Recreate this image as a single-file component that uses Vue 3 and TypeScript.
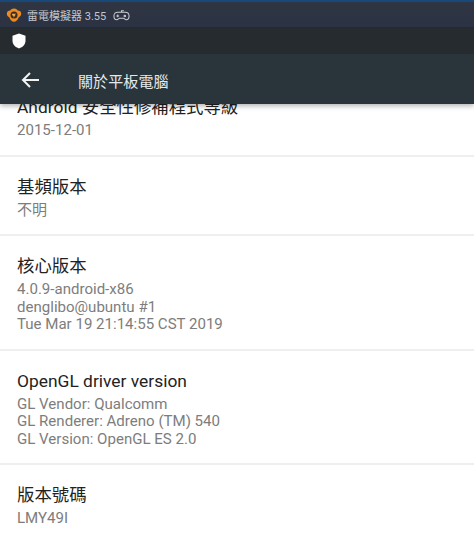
<script setup lang="ts">
interface Row { title: string; lines: string[] }
const rows: Row[] = [
  { title: 'Android 安全性修補程式等級', lines: ['2015-12-01'] },
  { title: '基頻版本', lines: ['不明'] },
  { title: '核心版本', lines: ['4.0.9-android-x86', 'denglibo@ubuntu #1', 'Tue Mar 19 21:14:55 CST 2019'] },
  { title: 'OpenGL driver version', lines: ['GL Vendor: Qualcomm', 'GL Renderer: Adreno (TM) 540', 'GL Version: OpenGL ES 2.0'] },
  { title: '版本號碼', lines: ['LMY49I'] },
]
</script>

<template>
  <div class="screen">
    <header class="header">
      <div class="titlebar">
        <svg class="logo" viewBox="0 0 16 16" width="16" height="16">
          <path d="M8 1.500C5.800 1.500 4.800 2.600 4.300 3.600 2.300 3.600.8 4.800.8 6.800c0 1.800 1.200 3 2.600 3.700C4.200 13 6 14.800 8 14.800s3.800-1.800 4.600-4.300c1.400-.7 2.600-1.900 2.600-3.700 0-2-1.500-3.200-3.500-3.200C11.200 2.600 10.200 1.500 8 1.500Z" fill="#ee8a22"/>
          <circle cx="8" cy="8" r="3.500" fill="#3a2d26"/>
          <path d="M5.800 6.800h4.400L8.600 8.300l.9.300L7.200 10.800l.5-1.800-1.100-.3Z" fill="#f0a850"/>
        </svg>
        <span class="app-name">雷電模擬器 3.55</span>
        <svg class="pad" viewBox="0 0 18 12" width="17" height="12" fill="none" stroke="#c9ccd0" stroke-width="1.100">
          <path d="M5 3h8c2.200 0 4 1.700 4 4s-1.300 4-3 4c-1.500 0-2-1.500-3-1.500H7C6 9.500 5.500 11 4 11 2.300 11 1 9.300 1 7s1.800-4 4-4Z"/>
          <path d="M9 3V1.500h2.500M3.500 7h3M5 5.500v3"/>
          <circle cx="12.500" cy="7" r=".8"/>
        </svg>
      </div>
      <div class="statusbar">
        <svg viewBox="0 0 14 16" width="14" height="16">
          <path d="M7 .5 13.500 2.800v5c0 3.700-2.700 6.300-6.500 7.700C3.200 14.100.5 11.500.5 7.800v-5Z" fill="#fff"/>
        </svg>
      </div>
      <div class="toolbar">
        <svg class="back" viewBox="0 0 18 16" width="18" height="16" fill="none" stroke="#f2f4f4" stroke-width="2">
          <path d="M18 8H2M9 1 2 8l7 7"/>
        </svg>
        <span class="page-title">關於平板電腦</span>
      </div>
    </header>
    <main class="list">
      <section v-for="row in rows" :key="row.title" class="row">
        <div class="title">{{ row.title }}</div>
        <div v-for="line in row.lines" :key="line" class="sub">{{ line }}</div>
      </section>
    </main>
  </div>
</template>

<style>
html, body { margin: 0; background: #fff; overflow: hidden; }
</style>

<style scoped>
.screen {
  width: 474px;
  height: 545px;
  overflow: hidden;
  background: #fff;
  font-family: Roboto, "Noto Sans CJK TC", sans-serif;
}
.header {
  position: relative;
  z-index: 2;
  box-shadow: 0 2px 5px rgba(0, 0, 0, 0.3);
}
.titlebar {
  height: 25px;
  border-top: 2px solid #17497a;
  background: linear-gradient(#2f3542, #2b3243);
  display: flex;
  align-items: center;
  padding-left: 6px;
  color: #c2c6cc;
  font-size: 11px;
}
.logo { margin-right: 5px; }
.app-name { white-space: nowrap; }
.pad { margin-left: 7px; }
.statusbar {
  height: 27px;
  background: #252b2e;
  display: flex;
  align-items: center;
  padding-left: 12px;
}
.toolbar {
  height: 48px;
  padding-top: 2px;
  background: #2a353b;
  display: flex;
  align-items: center;
  padding-left: 21px;
}
.page-title {
  margin-left: 39px;
  color: #e6e9ea;
  font-size: 15px;
  letter-spacing: 0.1px;
}
.list { margin-top: -27px; }
.row {
  padding: 18px 17px 15px;
  border-bottom: 2px solid #efefef;
}
.row:last-child { border-bottom: 0; }
.title {
  color: #222;
  font-size: 17.400px;
  line-height: 24px;
  margin-bottom: 3px;
  white-space: nowrap;
}
.sub {
  color: #7d7d7d;
  font-size: 15.050px;
  line-height: 17.500px;
  white-space: nowrap;
}
</style>
